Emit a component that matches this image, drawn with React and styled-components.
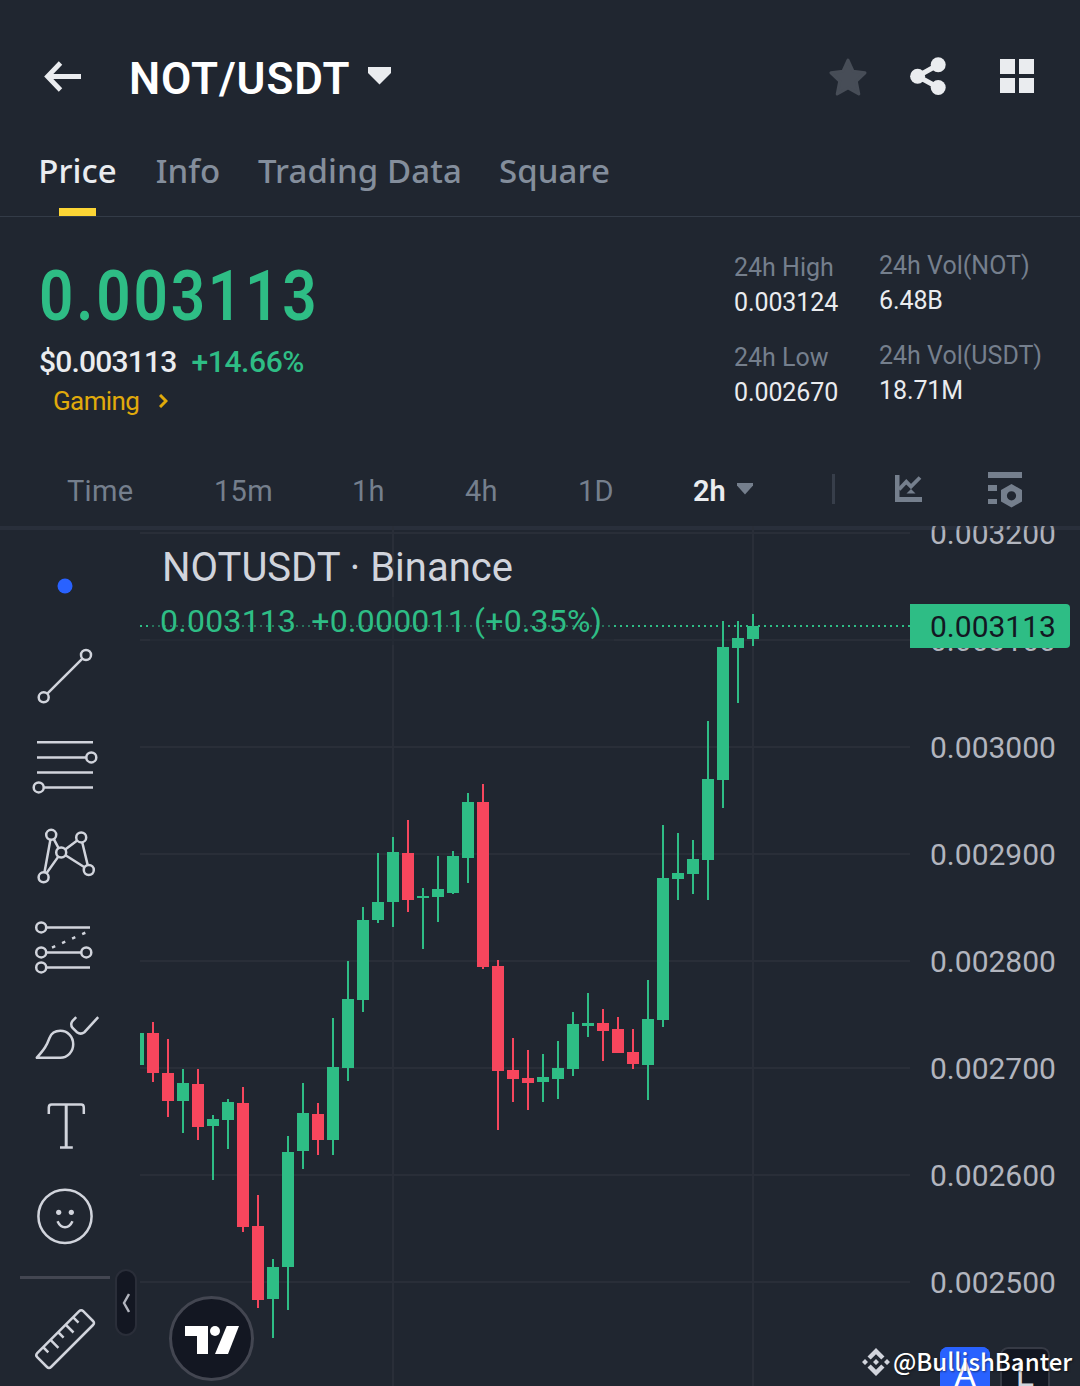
import styled, { createGlobalStyle } from "styled-components";

const UP = "#2ebd85";
const DOWN = "#f6465d";
const MUTED = "#848e9c";

const GlobalStyle = createGlobalStyle`
    * {
        box-sizing : border-box;
    }

    body {
        margin : 0;
        background-color : #202630;
        font-family : Roboto, "Liberation Sans", sans-serif;
    }
`

const Screen = styled.div`
    width : 1080px;
    height : 1386px;
    position : relative;
    overflow : hidden;

    display : flex;
    flex-direction : column;

    background-color : #202630;
    color : #eaecef;
    white-space : nowrap;
`

const Header = styled.header`
    height : 154px;
    flex-shrink : 0;
    padding : 0 46px 2px 44px;

    display : flex;
    align-items : center;

    > .title {
        margin : 5px 0 0 47px;
        font-size : 44px;
        font-weight : 600;
        letter-spacing : 0.9px;
        color : #ffffff;
    }

    > .caret {
        margin-left : 18px;
    }

    > .actions {
        margin-left : auto;
        display : flex;
        align-items : center;
    }

    .star {
        margin-top : 2px;
    }

    .share {
        margin : 0 54px 0 43px;
    }
`

const Tabs = styled.nav`
    height : 63px;
    flex-shrink : 0;
    padding-left : 38px;

    display : flex;
    gap : 37px;

    border-bottom : 1px solid #333b47;
`

const Tab = styled.div`
    width : ${(props) => props.$width}px;

    display : flex;
    flex-direction : column;
    justify-content : space-between;
    align-items : center;

    font-family : "Noto Sans", sans-serif;
    font-size : 33px;
    line-height : 34px;
    font-weight : 500;
    letter-spacing : 0.1px;
    color : ${(props) => (props.$active ? "#eaecef" : MUTED)};

    &::after {
        content : "";
        width : 37px;
        height : 8px;
        background-color : ${(props) => (props.$active ? "#fcd535" : "transparent")};
    }
`

const Summary = styled.section`
    height : 239px;
    flex-shrink : 0;
    padding-left : 39px;

    display : flex;
`

const Quote = styled.div`
    width : 695px;
    padding-top : 38px;

    > .last {
        font-size : 70px;
        line-height : 82px;
        font-weight : 600;
        letter-spacing : 3.3px;
        color : ${UP};
        transform : scaleX(0.86);
        transform-origin : left;
    }

    > .change {
        display : flex;
        gap : 15px;
        margin-top : 6px;

        font-size : 30px;
        line-height : 38px;
        font-weight : 500;
        letter-spacing : -0.8px;
    }

    .percent {
        color : ${UP};
        letter-spacing : -0.4px;
    }

    > .sector {
        display : flex;
        align-items : center;
        gap : 20px;
        padding-left : 14px;

        font-size : 26px;
        line-height : 40px;
        letter-spacing : -0.6px;
        color : #e0aa0b;
    }
`

const StatColumn = styled.div`
    width : 145px;
    padding-top : ${(props) => props.$top}px;

    display : flex;
    flex-direction : column;
    gap : 20px;
`

const Stat = styled.div`
    font-size : 25px;
    line-height : 35px;

    > .label {
        color : #757f8d;
    }

    > .value {
        letter-spacing : -0.1px;
    }
`

const Intervals = styled.nav`
    height : 70px;
    flex-shrink : 0;
    padding : 0 58px 4px 67px;

    display : flex;
    align-items : center;

    font-size : 29px;
    color : #757f8d;

    > .split {
        width : 3px;
        height : 30px;
        margin-right : 60px;
        background-color : #373e4a;
    }

    > .settings {
        margin : 2px 0 0 auto;
    }
`

const Interval = styled.div`
    width : ${(props) => props.$width}px;
    padding-top : 4px;

    display : flex;
    align-items : center;
    gap : 11px;

    letter-spacing : ${(props) => (props.$active ? 0 : 0.3)}px;
    font-weight : ${(props) => (props.$active ? 600 : 400)};
    color : ${(props) => (props.$active ? "#eaecef" : "inherit")};

    > svg {
        margin-top : -5px;
    }
`

const ChartArea = styled.main`
    height : 860px;
    position : relative;
    overflow : hidden;

    display : flex;

    &::before {
        content : "";
        position : absolute;
        top : 0;
        left : 0;
        right : 0;
        height : 4px;
        background-color : rgba(67, 76, 90, 0.25);
    }
`

const ToolRail = styled.aside`
    width : 140px;
    flex-shrink : 0;
    padding : 15px 0 0 20px;

    display : flex;
    flex-direction : column;

    > svg {
        flex-shrink : 0;
    }

    > hr {
        width : 90px;
        height : 3px;
        margin : 15px 0 15px;
        border : none;
        flex-shrink : 0;
        background-color : #434651;
    }
`

const RailToggle = styled.div`
    position : absolute;
    left : 115px;
    top : 743px;
    width : 22px;
    height : 67px;

    display : flex;
    align-items : center;
    justify-content : center;

    border : 2px solid #2a2e39;
    border-radius : 11px;
    background-color : #131722;
`

const Plot = styled.div`
    width : 770px;
    flex-shrink : 0;
    position : relative;

    > svg {
        display : block;
    }
`

const Legend = styled.div`
    position : absolute;
    left : 10px;
    top : 15px;

    > .symbol {
        height : 54px;
        line-height : 54px;
        padding : 0 12px;
        font-size : 40px;
        color : #d1d4dc;
    }

    > .prices {
        width : 464px;
        height : 48px;
        margin-top : 2px;
        padding-left : 10px;
        display : flex;

        font-size : 32px;
        line-height : 48px;
        letter-spacing : 0.25px;
        color : ${UP};
        background-color : rgba(32, 38, 48, 0.5);
    }

    .delta {
        margin : 0 8px 0 15px;
    }
`

const TvBadge = styled.div`
    position : absolute;
    left : 29px;
    top : 770px;
    width : 85px;
    height : 85px;

    display : flex;
    align-items : center;
    justify-content : center;

    border : 3px solid #434651;
    border-radius : 50%;
    background-color : #131722;

    > svg {
        margin-top : 2px;
    }
`

const Axis = styled.div`
    width : 170px;
    margin-top : -46px;
    flex-shrink : 0;

    > div {
        height : 107px;
        line-height : 107px;
        padding-left : 20px;
        font-size : 30px;
        color : #b2b5be;
    }
`

const PriceTag = styled.div`
    position : absolute;
    left : 910px;
    top : 78px;
    width : 160px;
    height : 44px;
    padding-left : 20px;

    font-size : 30px;
    line-height : 46px;
    color : #131722;
    background-color : ${UP};
    border-radius : 0 4px 4px 0;
`

const ScaleButtons = styled.div`
    position : absolute;
    left : 940px;
    top : 821px;

    display : flex;
    gap : 10px;
`

const ScaleButton = styled.div`
    width : 50px;
    height : 50px;

    font-size : 34px;
    line-height : 54px;
    text-align : center;
    color : ${(props) => (props.$on ? "#ffffff" : "#d1d4dc")};
    background-color : ${(props) => (props.$on ? "#2962ff" : "#131722")};
    border-radius : 8px;
    box-shadow : inset 0 0 0 2px ${(props) => (props.$on ? "#2962ff" : "#363a45")};
`

const Watermark = styled.div`
    position : absolute;
    left : 862px;
    top : 1342px;

    display : flex;
    align-items : center;
    gap : 3px;

    font-family : "Noto Sans CJK SC", sans-serif;
    font-size : 24px;
    line-height : 40px;
    font-weight : 500;
    color : #ffffff;
    text-shadow : 1px 1px 2px rgba(0, 0, 0, 0.5);

    > svg {
        margin-top : 1px;
    }

    > span {
        margin-top : -1px;
    }
`

const tabs = [
    { name: "Price", width: 79, active: true },
    { name: "Info", width: 68 },
    { name: "Trading Data", width: 202 },
    { name: "Square", width: 113 },
]

const stats = [
    [["24h High", "0.003124"], ["24h Low", "0.002670"]],
    [["24h Vol(NOT)", "6.48B"], ["24h Vol(USDT)", "18.71M"]],
]

const intervals = [
    { name: "Time", width: 147 },
    { name: "15m", width: 138 },
    { name: "1h", width: 113 },
    { name: "4h", width: 113 },
    { name: "1D", width: 115 },
    { name: "2h", width: 139, active: true },
]

const ticks = ["0.003200", "0.003100", "0.003000", "0.002900", "0.002800", "0.002700", "0.002600", "0.002500"]

// [rising, wick top, wick bottom, body top, body bottom]
const candles = [
    [1, 1033, 1065, 1033, 1065],
    [0, 1022, 1082, 1033, 1073],
    [0, 1039, 1117, 1073, 1101],
    [1, 1069, 1133, 1083, 1101],
    [0, 1069, 1140, 1084, 1127],
    [1, 1115, 1180, 1119, 1126],
    [1, 1099, 1149, 1102, 1120],
    [0, 1087, 1232, 1103, 1227],
    [0, 1195, 1308, 1226, 1300],
    [1, 1259, 1338, 1267, 1299],
    [1, 1136, 1310, 1152, 1267],
    [1, 1083, 1169, 1113, 1151],
    [0, 1103, 1155, 1114, 1140],
    [1, 1018, 1155, 1067, 1140],
    [1, 961, 1081, 999, 1068],
    [1, 907, 1012, 920, 1000],
    [1, 853, 923, 902, 920],
    [1, 837, 927, 852, 902],
    [0, 820, 912, 853, 900],
    [1, 888, 949, 896, 898],
    [1, 856, 922, 889, 897],
    [1, 851, 894, 856, 893],
    [1, 793, 883, 802, 858],
    [0, 784, 969, 802, 967],
    [0, 960, 1130, 966, 1071],
    [0, 1038, 1102, 1070, 1079],
    [0, 1050, 1110, 1078, 1083],
    [1, 1054, 1102, 1077, 1082],
    [1, 1041, 1099, 1068, 1079],
    [1, 1012, 1076, 1024, 1069],
    [1, 993, 1037, 1023, 1026],
    [0, 1009, 1061, 1023, 1031],
    [0, 1017, 1053, 1029, 1053],
    [0, 1029, 1069, 1052, 1064],
    [1, 980, 1100, 1019, 1065],
    [1, 825, 1027, 878, 1020],
    [1, 833, 900, 873, 879],
    [1, 840, 894, 859, 874],
    [1, 721, 900, 779, 860],
    [1, 621, 808, 647, 780],
    [1, 621, 703, 638, 648],
    [1, 614, 646, 626, 639],
]

const Tool = ({ children }) => (
    <svg width="90" height="90" viewBox="0 0 90 90" fill="none" stroke="#d1d4dc" strokeWidth="2.5">
        {children}
    </svg>
)

const Tools = () => (
    <ToolRail>
        <Tool>
            <circle cx="45" cy="45" r="7.5" fill="#2962ff" stroke="none" />
        </Tool>
        <Tool>
            <circle cx="66" cy="24" r="5" />
            <circle cx="23.7" cy="66.3" r="5" />
            <path d="M27.3 62.7 62.4 27.6" />
        </Tool>
        <Tool>
            <path d="M17 21.3H73M17 36.4H66M17 51.4H73M24 66.4H73" />
            <circle cx="71.3" cy="36.4" r="5" />
            <circle cx="18.7" cy="66.4" r="5" />
        </Tool>
        <Tool>
            <circle cx="31.2" cy="23.8" r="5" />
            <circle cx="61.2" cy="26.4" r="5" />
            <circle cx="41.2" cy="41.5" r="5" />
            <circle cx="23.6" cy="66.3" r="5" />
            <circle cx="68.8" cy="59" r="5" />
            <path d="M24.5 61.3 30.4 28.8M33.8 28.1 38.6 37.2M45.2 38.5 57.2 29.4M62.2 31.3 67.7 54.1M45.5 44.2 64.5 56.3M38.3 45.6 26.5 62.2" />
        </Tool>
        <Tool>
            <path d="M26 26.4H70M26 51.4H61.5M26 66.4H70" />
            <circle cx="21.2" cy="26.4" r="5" />
            <circle cx="21.2" cy="51.4" r="5" />
            <circle cx="21.2" cy="66.4" r="5" />
            <circle cx="66.3" cy="51.4" r="5" />
            <path d="M32 46.6 67 31" strokeDasharray="3.5 7.5" />
        </Tool>
        <Tool>
            <path strokeLinejoin="round" d="M16.8 66.7H40.3C47.5 66.7 53.2 60.8 53.2 53.3C53.2 45.3 47.5 39.8 40.3 39.8C35.3 39.8 31.3 42.3 29.5 47C26.8 54.2 24.7 58 16.8 66.7Z" />
            <path d="M56.2 26.2 52.6 29.8Q49.8 33.4 52.6 37L57 41.2Q60.7 44 64.4 41.2L78.2 26.2" />
        </Tool>
        <Tool>
            <path d="M28.8 33V26.5Q28.8 23.4 31.6 23.4H61.2Q63.8 23.4 63.8 26.5V33M40 66.4H52.8" />
            <path d="M46.2 23.4V66.4" strokeWidth="3" />
        </Tool>
        <Tool>
            <circle cx="45" cy="45.3" r="26.6" />
            <circle cx="38.7" cy="41.3" r="2.6" fill="#d1d4dc" stroke="none" />
            <circle cx="51.3" cy="41.3" r="2.6" fill="#d1d4dc" stroke="none" />
            <path d="M37.5 50.3C39.5 54.6 42 56.3 45 56.3S50.5 54.6 52.5 50.3" />
        </Tool>
        <hr />
        <Tool>
            <path d="M59.2 17.2Q61.2 15.2 63.2 17.2L73 27Q75 29 73 31L31 73Q29 75 27 73L17.2 63.2Q15.2 61.2 17.2 59.2Z" />
            <path d="M23.5 53.5 28.3 58.3M30.8 46.2 38.4 53.8M38.5 38.5 43.6 43.6M46 31 53.5 38.5M53.5 23.7 58.5 28.7" />
        </Tool>
    </ToolRail>
)

const Candle = ({ x, data }) => {
    const [rising, high, low, top, bottom] = data

    return (
        <g fill={rising ? UP : DOWN}>
            <rect x={x - 1} y={high} width="2" height={low - high} />
            <rect x={x - 6} y={top} width="12" height={bottom - top} />
        </g>
    )
}

const Chart = () => (
    <Plot>
        <svg width="770" height="860" viewBox="140 526 770 860" shapeRendering="crispEdges">
            <g fill="#292e38">
                {ticks.map((tick, i) => (
                    <rect key={tick} x="140" y={532 + i * 107} width="770" height="2" />
                ))}
                <rect x="392" y="526" width="2" height="860" />
                <rect x="752" y="526" width="2" height="860" />
            </g>
            <path d="M140 626H910" stroke={UP} strokeWidth="2" strokeDasharray="2 4" />
            {candles.map((data, i) => (
                <Candle key={i} x={138 + i * 15} data={data} />
            ))}
        </svg>
        <Legend>
            <div className="symbol">NOTUSDT · Binance</div>
            <div className="prices">
                <span>0.003113</span>
                <span className="delta">+0.000011</span>
                <span>(+0.35%)</span>
            </div>
        </Legend>
        <TvBadge>
            <svg width="54" height="28" viewBox="0 0 54 28" fill="#ffffff">
                <path d="M0 0H23V28H12V10H0Z" />
                <circle cx="30" cy="5" r="5" />
                <path d="M41.7 0H54L43 28H30Z" />
            </svg>
        </TvBadge>
    </Plot>
)

export default function App() {
    return (
        <Screen>
            <GlobalStyle />
            <Header>
                <svg width="38" height="32" viewBox="0 0 38 32" fill="none" stroke="#eaecef" strokeWidth="4.8">
                    <path d="M37 16.5H4M16.5 3 3.5 16.5 16.5 30" />
                </svg>
                <div className="title">NOT/USDT</div>
                <svg className="caret" width="23" height="18" viewBox="0 0 23 18" fill="#eaecef">
                    <path d="M0 0H23V6L11.5 17.5 0 6Z" />
                </svg>
                <div className="actions">
                    <svg className="star" width="38" height="38" viewBox="0 0 38 38" fill="#474d57" stroke="#474d57" strokeWidth="3" strokeLinejoin="round">
                        <path d="M19 2 24 13.2 36 14.8 27.3 23.2 29.8 36 19 30 8.2 36 10.7 23.2 2 14.8 14 13.2Z" />
                    </svg>
                    <svg className="share" width="36" height="38" viewBox="0 0 36 38" fill="#eaecef">
                        <circle cx="28.2" cy="7.7" r="7.5" />
                        <circle cx="7.6" cy="19.2" r="7.5" />
                        <circle cx="28.2" cy="30.5" r="7.5" />
                        <path d="M28.2 7.7 7.6 19.2 28.2 30.5" fill="none" stroke="#eaecef" strokeWidth="5" />
                    </svg>
                    <svg width="34" height="34" viewBox="0 0 34 34" fill="#eaecef">
                        <path d="M0 0H15V15H0ZM19 0H34V15H19ZM0 19H15V34H0ZM19 19H34V34H19Z" />
                    </svg>
                </div>
            </Header>
            <Tabs>
                {tabs.map((tab) => (
                    <Tab key={tab.name} $width={tab.width} $active={tab.active}>{tab.name}</Tab>
                ))}
            </Tabs>
            <Summary>
                <Quote>
                    <div className="last">0.003113</div>
                    <div className="change">
                        <span>$0.003113</span>
                        <span className="percent">+14.66%</span>
                    </div>
                    <div className="sector">
                        <span>Gaming</span>
                        <svg width="9" height="14" viewBox="0 0 9 14" fill="none" stroke="#e0aa0b" strokeWidth="3">
                            <path d="M1 1 7 7 1 13" />
                        </svg>
                    </div>
                </Quote>
                {stats.map((column, i) => (
                    <StatColumn key={i} $top={i ? 31 : 33}>
                        {column.map(([label, value]) => (
                            <Stat key={label}>
                                <div className="label">{label}</div>
                                <div className="value">{value}</div>
                            </Stat>
                        ))}
                    </StatColumn>
                ))}
            </Summary>
            <Intervals>
                {intervals.map((item) => (
                    <Interval key={item.name} $width={item.width} $active={item.active}>
                        {item.name}
                        {item.active && (
                            <svg width="16" height="12" viewBox="0 0 16 12" fill="#757f8d">
                                <path d="M0 0H16V2.5L8 11.5 0 2.5Z" />
                            </svg>
                        )}
                    </Interval>
                ))}
                <div className="split"></div>
                <svg width="27" height="28" viewBox="0 0 27 28" fill="#757f8d">
                    <path d="M0 0H4.5V22H27V27H0Z" />
                    <path d="M4 14.5 11.3 6.8 16 11.5 25 2.5" fill="none" stroke="#757f8d" strokeWidth="3.8" />
                    <path d="M16 14 20.5 18.5H11.5Z" />
                </svg>
                <svg className="settings" width="34" height="36" viewBox="0 0 34 36" fill="#757f8d">
                    <path d="M0 0H34V6H0ZM0 13H9V19H0ZM0 27H9V32H0Z" />
                    <path fillRule="evenodd" d="M23.5 12 34 18V29.5L23.5 35.5 13 29.5V18ZM23.5 19.2A4.6 4.6 0 1 0 23.5 28.4A4.6 4.6 0 1 0 23.5 19.2Z" />
                </svg>
            </Intervals>
            <ChartArea>
                <Tools />
                <Chart />
                <Axis>
                    {ticks.map((tick) => (
                        <div key={tick}>{tick}</div>
                    ))}
                </Axis>
                <RailToggle>
                    <svg width="8" height="20" viewBox="0 0 8 20" fill="none" stroke="#b2b5be" strokeWidth="2.4">
                        <path d="M7 1 2 10 7 19" />
                    </svg>
                </RailToggle>
                <PriceTag>0.003113</PriceTag>
                <ScaleButtons>
                    <ScaleButton $on>A</ScaleButton>
                    <ScaleButton>L</ScaleButton>
                </ScaleButtons>
            </ChartArea>
            <Watermark>
                <svg width="28" height="28" viewBox="0 0 28 28" fill="#d1d4dc">
                    <path d="M14 0 22.5 8.5 19.3 11.6 14 6.3 8.7 11.6 5.5 8.5ZM14 28 22.5 19.5 19.3 16.4 14 21.7 8.7 16.4 5.5 19.5Z" />
                    <path d="M3 11 6 14 3 17 0 14ZM25 11 28 14 25 17 22 14ZM14 11 17 14 14 17 11 14Z" />
                </svg>
                <span>@BullishBanter</span>
            </Watermark>
        </Screen>
    )
}
